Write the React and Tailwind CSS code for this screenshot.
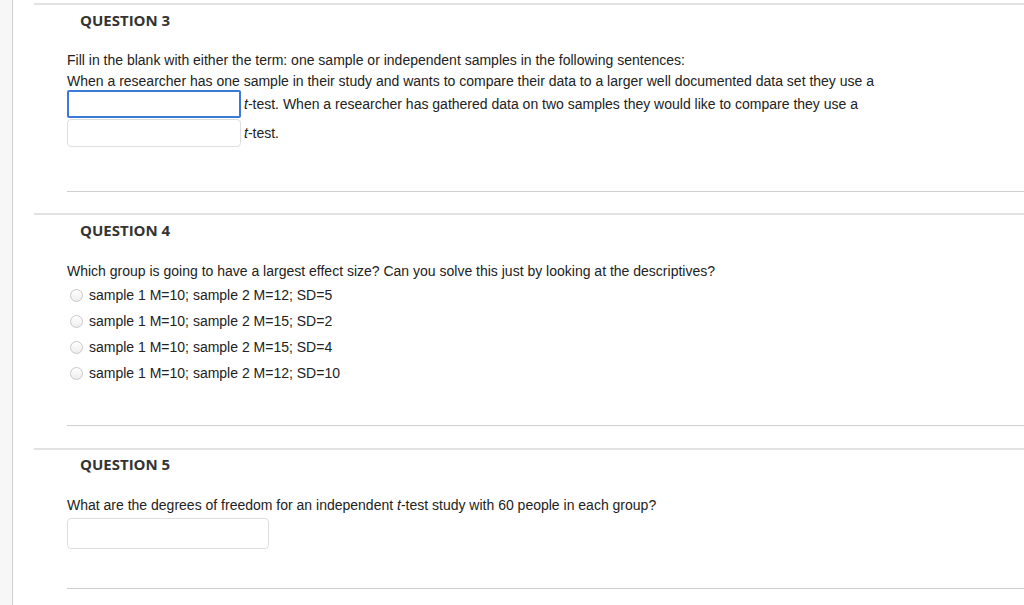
import React from "react";

const body = { fontFamily: '"Liberation Sans", Arial, sans-serif' };
const head = { fontFamily: '"Open Sans", "Liberation Sans", sans-serif' };

function Heading({ children, mt }) {
  return (
    <div className={`${mt} h-[20px] pl-[46px] text-[15px] leading-[20px] font-bold text-[#333]`} style={head}>
      {children}
    </div>
  );
}

function Radio() {
  return (
    <span className="inline-block w-[13px] h-[13px] rounded-full border border-[#c8c8c8] bg-gradient-to-b from-[#ffffff] to-[#ededed] shrink-0" />
  );
}

export default function App() {
  const options = [
    "sample 1 M=10; sample 2 M=12; SD=5",
    "sample 1 M=10; sample 2 M=15; SD=2",
    "sample 1 M=10; sample 2 M=15; SD=4",
    "sample 1 M=10; sample 2 M=12; SD=10",
  ];
  return (
    <div className="flex h-[605px] w-[1024px] overflow-hidden bg-white text-[14px] text-[#222]" style={body}>
      <div className="w-[13px] shrink-0 bg-[#f7f7f7] border-r border-[#cfcfcf]" />
      <div className="flex-1 pl-[21px] pt-[3px]">
        {/* Question 3 */}
        <section className="border-t-2 border-[#e2e2e2]">
          <Heading mt="mt-[5px]">QUESTION 3</Heading>
          <div className="pl-[33px]">
            <div className="mt-[20px] h-[21px] leading-[21px] whitespace-nowrap">
              Fill in the blank with either the term: one sample or independent samples in the following sentences:
            </div>
            <div className="h-[19px] leading-[21px] whitespace-nowrap">
              When a researcher has one sample in their study and wants to compare their data to a larger well documented data set they use a
            </div>
            <div className="flex items-center h-[28px]">
              <div className="w-[174px] h-[28px] border-2 border-[#3d79d6] rounded-[2px] bg-white shrink-0" />
              <span className="ml-[3px] whitespace-nowrap">
                <i>t</i>-test. When a researcher has gathered data on two samples they would like to compare they use a
              </span>
            </div>
            <div className="flex items-center h-[28px] mt-[1px]">
              <div className="w-[174px] h-[28px] border border-[#dedede] rounded-[4px] bg-white shrink-0" />
              <span className="ml-[3px]">
                <i>t</i>-test.
              </span>
            </div>
            <div className="mt-[44px] border-t border-[#cfcfcf]" />
          </div>
        </section>

        {/* Question 4 */}
        <section className="mt-[21px] border-t-2 border-[#e2e2e2]">
          <Heading mt="mt-[5px]">QUESTION 4</Heading>
          <div className="pl-[33px]">
            <div className="mt-[21px] h-[20px] leading-[21px] whitespace-nowrap">
              Which group is going to have a largest effect size? Can you solve this just by looking at the descriptives?
            </div>
            <div className="mt-[1px]">
              {options.map((o) => (
                <div key={o} className="flex items-center h-[26px] pl-[3px]">
                  <Radio />
                  <span className="ml-[6px]">{o}</span>
                </div>
              ))}
            </div>
            <div className="mt-[39px] border-t border-[#cfcfcf]" />
          </div>
        </section>

        {/* Question 5 */}
        <section className="mt-[22px] border-t-2 border-[#e2e2e2]">
          <Heading mt="mt-[4px]">QUESTION 5</Heading>
          <div className="pl-[33px]">
            <div className="mt-[21px] h-[20px] leading-[21px] whitespace-nowrap">
              What are the degrees of freedom for an independent <i>t</i>-test study with 60 people in each group?
            </div>
            <div className="mt-[3px] w-[202px] h-[31px] border border-[#dedede] rounded-[4px] bg-white" />
            <div className="mt-[39px] border-t border-[#cfcfcf]" />
          </div>
        </section>
      </div>
    </div>
  );
}
